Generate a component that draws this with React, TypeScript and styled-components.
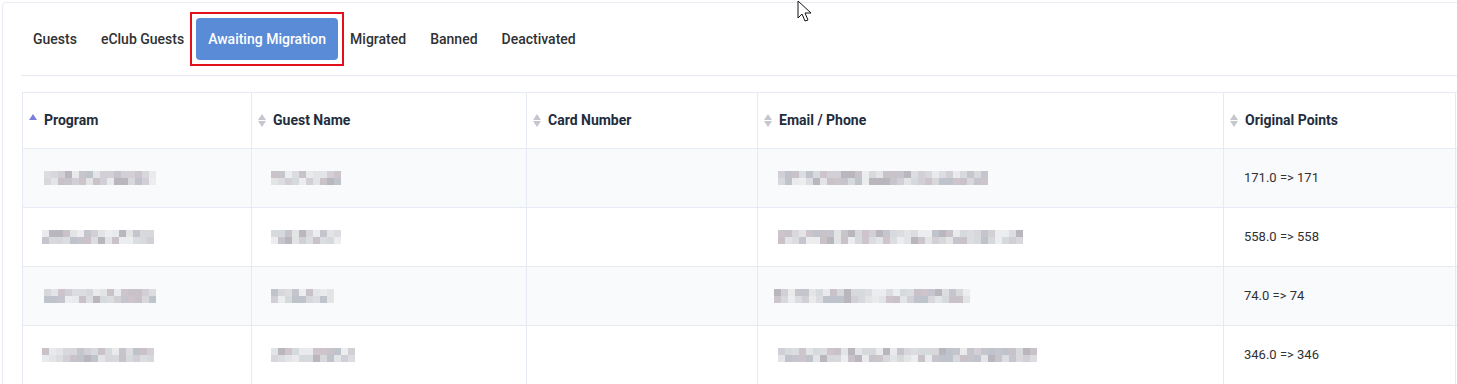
import React from 'react';
import styled, { createGlobalStyle } from 'styled-components';

const GlobalStyle = createGlobalStyle`
  html, body {
    margin: 0;
    padding: 0;
    background: #ffffff;
    overflow: hidden;
    font-family: Roboto, "Liberation Sans", Arial, sans-serif;
  }
`;

const Page = styled.div`
  width: 1700px;
  padding: 2px 0 0 2px;
`;

const Card = styled.div`
  border: 1px solid #e8ecf3;
  border-radius: 4px;
  padding: 15px 0 40px 19px;
  background: #fff;
`;

const TabBar = styled.div`
  display: flex;
  align-items: center;
  height: 42px;
  padding-bottom: 15px;
  margin-left: -1px;
  border-bottom: 1px solid #e6eaf1;
`;

const Tab = styled.div<{ $active?: boolean }>`
  position: relative;
  height: 42px;
  display: flex;
  align-items: center;
  padding: 0 12px;
  font-size: 14px;
  font-weight: 500;
  color: ${p => (p.$active ? '#ffffff' : '#303133')};
  background: ${p => (p.$active ? '#5a8bd6' : 'transparent')};
  border-radius: 4px;
  cursor: pointer;
  white-space: nowrap;

  ${p =>
    p.$active &&
    `
    &::after {
      content: '';
      position: absolute;
      left: -6px;
      right: -6px;
      top: -6px;
      bottom: -6px;
      border: 2px solid #e2101a;
    }
  `}
`;

const TableWrap = styled.div`
  margin-top: 16px;
`;

const Table = styled.table`
  border-collapse: collapse;
  table-layout: fixed;
`;

const HeadCell = styled.th<{ $w: number }>`
  width: ${p => p.$w}px;
  height: 56px;
  padding: 0 0 1px 6px;
  border: 1px solid #e6eaf2;
  text-align: left;
  font-size: 14px;
  font-weight: 700;
  color: #1f2d3d;
  box-sizing: border-box;
`;

const HeadInner = styled.div`
  display: flex;
  align-items: center;
  gap: 7px;
`;

const SortIcon = styled.span`
  display: flex;
  flex-direction: column;
  gap: 1px;
  width: 8px;
`;

const Tri = styled.span<{ $dir: 'up' | 'down'; $color: string }>`
  width: 0;
  height: 0;
  border-left: 4px solid transparent;
  border-right: 4px solid transparent;
  ${p =>
    p.$dir === 'up'
      ? `border-bottom: 6px solid ${p.$color};`
      : `border-top: 6px solid ${p.$color};`}
`;

const Row = styled.tr<{ $striped: boolean }>`
  background: ${p => (p.$striped ? '#f9fafc' : '#ffffff')};
`;

const Cell = styled.td`
  height: 59px;
  padding: 0 0 1px 20px;
  border: 1px solid #e6eaf2;
  font-size: 13px;
  color: #303133;
  box-sizing: border-box;
`;

const MosaicBox = styled.div<{ $shift: number }>`
  display: grid;
  grid-auto-flow: column;
  grid-template-rows: 7px 7px;
  margin-left: ${p => p.$shift}px;
  width: max-content;
`;

const Px = styled.span`
  width: 7px;
  height: 7px;
`;

const CursorBox = styled.div`
  position: fixed;
  left: 797px;
  top: 0;
  pointer-events: none;
`;

const palette = [
  '#c6c4cc', '#d8d8dc', '#e3e4e6', '#cdc5cb', '#dcdde0', '#e9eaeb',
  '#bfc3cb', '#d2d0d6', '#ecedee', '#c9c2c8', '#d6dadd', '#b9b6be',
];

const Mosaic = ({ width, seed, shift = 0 }: { width: number; seed: number; shift?: number }) => {
  const cols = Math.round(width / 7);
  const cells: string[] = [];
  let s = seed * 7919 + 104729;
  for (let i = 0; i < cols * 2; i++) {
    s = (s * 16807) % 2147483647;
    cells.push(palette[s % palette.length]);
  }
  return (
    <MosaicBox $shift={shift}>
      {cells.map((c, i) => (
        <Px key={i} style={{ background: c }} />
      ))}
    </MosaicBox>
  );
};

const columns = [
  { title: 'Program', w: 229, active: true },
  { title: 'Guest Name', w: 275 },
  { title: 'Card Number', w: 231 },
  { title: 'Email / Phone', w: 466 },
  { title: 'Original Points', w: 232 },
  { title: '', w: 200, noSort: true },
];

const rows = [
  { program: 112, name: 67, email: 210, emailShift: 0, points: '171.0 => 171' },
  { program: 112, name: 70, email: 245, emailShift: 0, points: '558.0 => 558' },
  { program: 112, name: 63, email: 196, emailShift: -4, points: '74.0 => 74' },
  { program: 112, name: 84, email: 259, emailShift: 0, points: '346.0 => 346' },
];

const tabs = ['Guests', 'eClub Guests', 'Awaiting Migration', 'Migrated', 'Banned', 'Deactivated'];

const App = () => {
  return (
    <Page>
      <GlobalStyle />
      <Card>
        <TabBar>
          {tabs.map(t => (
            <Tab key={t} $active={t === 'Awaiting Migration'}>
              {t}
            </Tab>
          ))}
        </TabBar>
        <TableWrap>
          <Table>
            <thead>
              <tr>
                {columns.map((c, i) => (
                  <HeadCell key={i} $w={c.w}>
                    {!c.noSort && (
                      <HeadInner>
                        <SortIcon>
                          <Tri $dir="up" $color={c.active ? '#7b7fdc' : '#c4c7ce'} />
                          <Tri $dir="down" $color={c.active ? 'transparent' : '#c4c7ce'} />
                        </SortIcon>
                        {c.title}
                      </HeadInner>
                    )}
                  </HeadCell>
                ))}
              </tr>
            </thead>
            <tbody>
              {rows.map((r, i) => (
                <Row key={i} $striped={i % 2 === 0}>
                  <Cell>
                    <Mosaic width={r.program} seed={i * 4 + 1} shift={i % 2 === 0 ? 1 : -1} />
                  </Cell>
                  <Cell>
                    <Mosaic width={r.name} seed={i * 4 + 2} shift={-1} />
                  </Cell>
                  <Cell />
                  <Cell>
                    <Mosaic width={r.email} seed={i * 4 + 3} shift={r.emailShift} />
                  </Cell>
                  <Cell>{r.points}</Cell>
                  <Cell />
                </Row>
              ))}
            </tbody>
          </Table>
        </TableWrap>
      </Card>
      <CursorBox>
        <svg width="16" height="24" viewBox="0 0 16 24">
          <path
            d="M1 1 L1 18 L5 14 L8 21 L11 20 L8 13 L14 13 Z"
            fill="#fff"
            stroke="#111"
            strokeWidth="1"
            strokeLinejoin="round"
          />
        </svg>
      </CursorBox>
    </Page>
  );
};

export default App;
